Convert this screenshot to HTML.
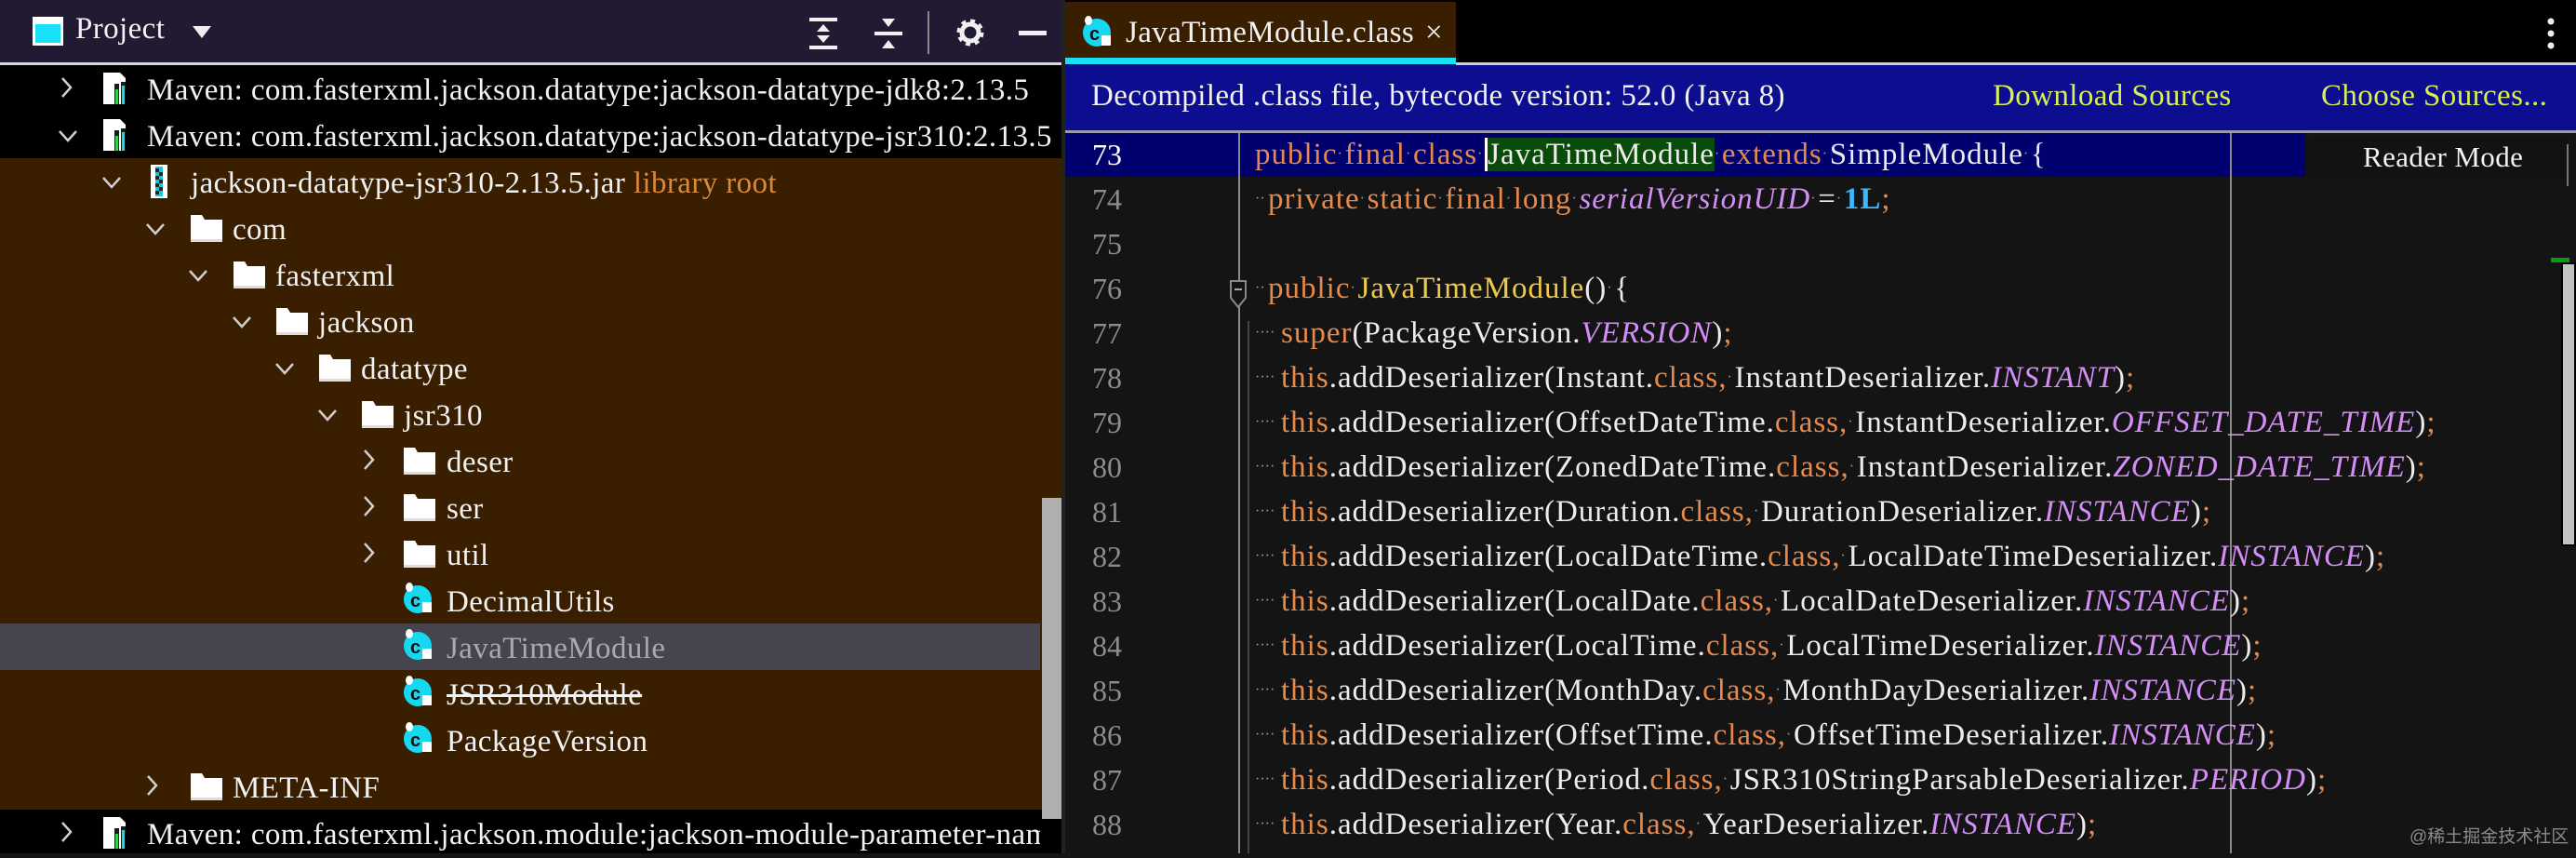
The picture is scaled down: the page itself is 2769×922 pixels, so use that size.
<!DOCTYPE html>
<html><head><meta charset="utf-8"><style>
*{margin:0;padding:0;box-sizing:border-box}
body{width:2769px;height:917px;overflow:hidden;background:#141414;position:relative;font-family:"Liberation Serif","Noto Serif CJK SC",serif;color:#f2f2f2}
.a{position:absolute}
.t{position:absolute;font-size:33px;line-height:50px;white-space:nowrap;letter-spacing:0.4px}
.c{position:absolute;font-size:33px;line-height:48px;white-space:nowrap;letter-spacing:1px;color:#ececec}
.k{color:#e8894a}.f{color:#d58ef7;font-style:italic}.n{color:#3cb8ff;font-weight:bold}.y{color:#eec94a}
.d{color:#9a9a9a;font-size:16px;display:inline-block;width:8px;vertical-align:top;letter-spacing:0;overflow:hidden}
.ln{position:absolute;left:1174px;font-size:32px;line-height:48px;color:#8c8c8c}
</style></head><body>
<div class="a" style="left:0;top:0;width:1145px;height:68px;background:#221a33"></div>
<div class="a" style="left:0;top:67px;width:1145px;height:3px;background:#d8d8d8"></div>
<div class="a" style="left:0;top:70px;width:1145px;height:100px;background:#000"></div>
<div class="a" style="left:0;top:170px;width:1145px;height:700px;background:#3a1e00"></div>
<div class="a" style="left:0;top:870px;width:1145px;height:47px;background:#000"></div>
<div class="a" style="left:0;top:670px;width:1118px;height:50px;background:#45444f"></div>
<div class="a" style="left:1120px;top:535px;width:21px;height:345px;background:#b0b0b0"></div>
<svg class="a" style="left:34px;top:17px" width="36" height="34"><rect x="1" y="1" width="33" height="31" fill="#fff"/><rect x="4" y="9" width="27" height="20" fill="#18e0f6"/></svg>
<div class="t" style="left:81px;top:6px">Project</div>
<svg class="a" style="left:206px;top:27px" width="22" height="16"><path d="M1 1h20L11 14z" fill="#eee"/></svg>
<svg class="a" style="left:868px;top:18px" width="36" height="36" fill="#f0f0f0"><rect x="2" y="1" width="30" height="4"/><rect x="2" y="31" width="30" height="4"/><path d="M17 8l7 8H10z M17 28l7-8H10z"/></svg>
<svg class="a" style="left:938px;top:18px" width="36" height="36" fill="#f0f0f0"><rect x="2" y="16" width="30" height="4"/><path d="M10 2h14l-7 9z M10 34h14l-7-9z"/></svg>
<div class="a" style="left:997px;top:12px;width:2px;height:46px;background:#888"></div>
<svg class="a" style="left:1026px;top:18px" width="34" height="34"><circle cx="17" cy="17" r="11" fill="none" stroke="#f0f0f0" stroke-width="7" stroke-dasharray="4.3 4.3"/><circle cx="17" cy="17" r="9" fill="none" stroke="#f0f0f0" stroke-width="5"/></svg>
<div class="a" style="left:1095px;top:33px;width:30px;height:5px;background:#f0f0f0"></div>

<svg width="0" height="0" style="position:absolute"><defs>
<g id="cr"><path d="M3 2l9 10-9 10" fill="none" stroke="#cfcfcf" stroke-width="2.5"/></g>
<g id="cd"><path d="M2 5l9 10 9-10" fill="none" stroke="#cfcfcf" stroke-width="2.5"/></g>
<g id="fo"><path d="M0 2h12l3 5h19v24H0z" fill="#fff"/><rect y="28" width="34" height="3" fill="#ddd"/></g>
<g id="cl"><circle cx="17" cy="19" r="15" fill="#16d8f0"/><ellipse cx="8" cy="6" rx="4" ry="5" fill="#fff"/><text x="9" y="27" font-family="Liberation Sans" font-size="20" font-weight="bold" fill="#111">c</text><rect x="22" y="22" width="10" height="11" fill="#fff"/></g>
<g id="mv"><path d="M0 0h18l6 6v28H0z" fill="#fff"/><rect x="12" y="12" width="5" height="22" fill="#1a1a1a"/><rect x="13" y="18" width="3" height="16" fill="#2fd04a"/><rect x="19" y="10" width="5" height="24" fill="#1a1a1a"/><rect x="20" y="14" width="3" height="20" fill="#18d8f0"/></g>
</defs></svg>

<svg class="a" style="left:64px;top:82px" width="20" height="26"><use href="#cr"/></svg>
<svg class="a" style="left:111px;top:78px" width="26" height="36"><use href="#mv"/></svg>
<div class="t" style="left:158px;top:72px">Maven: com.fasterxml.jackson.datatype:jackson-datatype-jdk8:2.13.5</div>
<svg class="a" style="left:62px;top:136px" width="24" height="22"><use href="#cd"/></svg>
<svg class="a" style="left:111px;top:128px" width="26" height="36"><use href="#mv"/></svg>
<div class="t" style="left:158px;top:122px">Maven: com.fasterxml.jackson.datatype:jackson-datatype-jsr310:2.13.5</div>
<svg class="a" style="left:109px;top:186px" width="24" height="22"><use href="#cd"/></svg>
<svg class="a" style="left:162px;top:177px" width="20" height="36"><rect x="0" y="0" width="18" height="36" fill="#fff"/><rect x="5" y="2" width="8" height="32" fill="#18c8d8"/><path d="M5 4h4v4H5zM9 8h4v4H9zM5 12h4v4H5zM9 16h4v4H9zM5 20h4v4H5zM9 24h4v4H9zM5 28h4v4H5z" fill="#222"/></svg>
<div class="t" style="left:205px;top:172px">jackson-datatype-jsr310-2.13.5.jar <span style="color:#d68a3c">library root</span></div>
<svg class="a" style="left:156px;top:236px" width="24" height="22"><use href="#cd"/></svg>
<svg class="a" style="left:205px;top:229px" width="36" height="33"><use href="#fo"/></svg>
<div class="t" style="left:250px;top:222px">com</div>
<svg class="a" style="left:202px;top:286px" width="24" height="22"><use href="#cd"/></svg>
<svg class="a" style="left:251px;top:279px" width="36" height="33"><use href="#fo"/></svg>
<div class="t" style="left:296px;top:272px">fasterxml</div>
<svg class="a" style="left:249px;top:336px" width="24" height="22"><use href="#cd"/></svg>
<svg class="a" style="left:297px;top:329px" width="36" height="33"><use href="#fo"/></svg>
<div class="t" style="left:342px;top:322px">jackson</div>
<svg class="a" style="left:295px;top:386px" width="24" height="22"><use href="#cd"/></svg>
<svg class="a" style="left:343px;top:379px" width="36" height="33"><use href="#fo"/></svg>
<div class="t" style="left:388px;top:372px">datatype</div>
<svg class="a" style="left:341px;top:436px" width="24" height="22"><use href="#cd"/></svg>
<svg class="a" style="left:389px;top:429px" width="36" height="33"><use href="#fo"/></svg>
<div class="t" style="left:434px;top:422px">jsr310</div>
<svg class="a" style="left:389px;top:482px" width="20" height="26"><use href="#cr"/></svg>
<svg class="a" style="left:434px;top:479px" width="36" height="33"><use href="#fo"/></svg>
<div class="t" style="left:480px;top:472px">deser</div>
<svg class="a" style="left:389px;top:532px" width="20" height="26"><use href="#cr"/></svg>
<svg class="a" style="left:434px;top:529px" width="36" height="33"><use href="#fo"/></svg>
<div class="t" style="left:480px;top:522px">ser</div>
<svg class="a" style="left:389px;top:582px" width="20" height="26"><use href="#cr"/></svg>
<svg class="a" style="left:434px;top:579px" width="36" height="33"><use href="#fo"/></svg>
<div class="t" style="left:480px;top:572px">util</div>
<svg class="a" style="left:432px;top:625px" width="36" height="36"><use href="#cl"/></svg>
<div class="t" style="left:480px;top:622px">DecimalUtils</div>
<svg class="a" style="left:432px;top:675px" width="36" height="36"><use href="#cl"/></svg>
<div class="t" style="left:480px;top:672px;color:#a9a9b2">JavaTimeModule</div>
<svg class="a" style="left:432px;top:725px" width="36" height="36"><use href="#cl"/></svg>
<div class="t" style="left:480px;top:722px;text-decoration:line-through">JSR310Module</div>
<svg class="a" style="left:432px;top:775px" width="36" height="36"><use href="#cl"/></svg>
<div class="t" style="left:480px;top:772px">PackageVersion</div>
<svg class="a" style="left:156px;top:832px" width="20" height="26"><use href="#cr"/></svg>
<svg class="a" style="left:205px;top:829px" width="36" height="33"><use href="#fo"/></svg>
<div class="t" style="left:250px;top:822px">META-INF</div>
<svg class="a" style="left:64px;top:882px" width="20" height="26"><use href="#cr"/></svg>
<svg class="a" style="left:111px;top:878px" width="26" height="36"><use href="#mv"/></svg>
<div class="t" style="left:158px;top:872px;width:960px;overflow:hidden">Maven: com.fasterxml.jackson.module:jackson-module-parameter-names</div>

<div class="a" style="left:1141px;top:0;width:4px;height:917px;background:#222"></div>
<div class="a" style="left:1145px;top:0;width:1624px;height:68px;background:#000"></div>
<div class="a" style="left:1145px;top:2px;width:420px;height:60px;background:#3a1e00"></div>
<div class="a" style="left:1145px;top:62px;width:420px;height:7px;background:#18e0f6"></div>
<div class="a" style="left:1565px;top:67px;width:1204px;height:3px;background:#d0d0d0"></div>
<svg class="a" style="left:1162px;top:16px" width="36" height="40"><use href="#cl"/></svg>
<div class="t" style="left:1210px;top:10px">JavaTimeModule.class</div>
<div class="t" style="left:1532px;top:10px">×</div>
<svg class="a" style="left:2736px;top:18px" width="12" height="36" fill="#eee"><circle cx="6" cy="5" r="3.5"/><circle cx="6" cy="18" r="3.5"/><circle cx="6" cy="31" r="3.5"/></svg>

<div class="a" style="left:1145px;top:70px;width:1624px;height:70px;background:#0d0d90"></div>
<div class="t" style="left:1173px;top:78px">Decompiled .class file, bytecode version: 52.0 (Java 8)</div>
<div class="t" style="left:2142px;top:78px;color:#d8ef58">Download Sources</div>
<div class="t" style="left:2495px;top:78px;color:#d8ef58">Choose Sources...</div>
<div class="a" style="left:1145px;top:140px;width:1624px;height:3px;background:#9a9aa8"></div>

<div class="a" style="left:1145px;top:143px;width:1333px;height:47px;background:#00006e"></div>
<div class="a" style="left:2478px;top:148px;width:282px;height:44px;background:#121212;border-top-left-radius:8px"></div>
<div class="t" style="left:2540px;top:146px;font-size:31px;line-height:46px">Reader Mode</div>
<div class="a" style="left:2759px;top:155px;width:2px;height:45px;background:#777"></div>
<div class="a" style="left:1331px;top:143px;width:2px;height:774px;background:#8a8a8a"></div>
<div class="a" style="left:2397px;top:143px;width:2px;height:774px;background:#8a8a8a"></div>
<div class="a" style="left:1341px;top:345px;width:2px;height:572px;background:#444"></div>
<svg class="a" style="left:1321px;top:300px" width="22" height="32"><path d="M2 2h16v18l-8 10-8-10z" fill="#141414" stroke="#888" stroke-width="2"/><path d="M6 11h8" stroke="#aaa" stroke-width="2"/></svg>
<div class="a" style="left:2742px;top:277px;width:20px;height:5px;background:#0a9a1a"></div>
<div class="a" style="left:2753px;top:282px;width:16px;height:305px;background:#c2c2c2;border:2px solid #000"></div>

<div class="ln" style="top:142px;color:#fff">73</div>
<div class="ln" style="top:190px">74</div>
<div class="ln" style="top:238px">75</div>
<div class="ln" style="top:286px">76</div>
<div class="ln" style="top:334px">77</div>
<div class="ln" style="top:382px">78</div>
<div class="ln" style="top:430px">79</div>
<div class="ln" style="top:478px">80</div>
<div class="ln" style="top:526px">81</div>
<div class="ln" style="top:574px">82</div>
<div class="ln" style="top:622px">83</div>
<div class="ln" style="top:670px">84</div>
<div class="ln" style="top:718px">85</div>
<div class="ln" style="top:766px">86</div>
<div class="ln" style="top:814px">87</div>
<div class="ln" style="top:862px">88</div>

<div class="c" style="left:1349px;top:142px"><span class="k">public</span><span class="d">·</span><span class="k">final</span><span class="d">·</span><span class="k">class</span><span class="d">·</span><span style="background:#0a4a0a;border-left:3px solid #fff">JavaTimeModule</span><span class="d">·</span><span class="k">extends</span><span class="d">·</span>SimpleModule<span class="d">·</span>{</div>
<div class="c" style="left:1349px;top:190px"><span class="d" style="width:14px">··</span><span class="k">private</span><span class="d">·</span><span class="k">static</span><span class="d">·</span><span class="k">final</span><span class="d">·</span><span class="k">long</span><span class="d">·</span><span class="f">serialVersionUID</span><span class="d">·</span>=<span class="d">·</span><span class="n">1L</span><span class="k">;</span></div>
<div class="c" style="left:1349px;top:286px"><span class="d" style="width:14px">··</span><span class="k">public</span><span class="d">·</span><span class="y">JavaTimeModule</span>()<span class="d">·</span>{</div>
<div class="c" style="left:1349px;top:334px"><span class="d" style="width:28px">····</span><span class="k">super</span>(PackageVersion.<span class="f">VERSION</span>)<span class="k">;</span></div>
<div class="c" style="left:1349px;top:382px"><span class="d" style="width:28px">····</span><span class="k">this</span>.addDeserializer(Instant.<span class="k">class,</span><span class="d">·</span>InstantDeserializer.<span class="f">INSTANT</span>)<span class="k">;</span></div>
<div class="c" style="left:1349px;top:430px"><span class="d" style="width:28px">····</span><span class="k">this</span>.addDeserializer(OffsetDateTime.<span class="k">class,</span><span class="d">·</span>InstantDeserializer.<span class="f">OFFSET_DATE_TIME</span>)<span class="k">;</span></div>
<div class="c" style="left:1349px;top:478px"><span class="d" style="width:28px">····</span><span class="k">this</span>.addDeserializer(ZonedDateTime.<span class="k">class,</span><span class="d">·</span>InstantDeserializer.<span class="f">ZONED_DATE_TIME</span>)<span class="k">;</span></div>
<div class="c" style="left:1349px;top:526px"><span class="d" style="width:28px">····</span><span class="k">this</span>.addDeserializer(Duration.<span class="k">class,</span><span class="d">·</span>DurationDeserializer.<span class="f">INSTANCE</span>)<span class="k">;</span></div>
<div class="c" style="left:1349px;top:574px"><span class="d" style="width:28px">····</span><span class="k">this</span>.addDeserializer(LocalDateTime.<span class="k">class,</span><span class="d">·</span>LocalDateTimeDeserializer.<span class="f">INSTANCE</span>)<span class="k">;</span></div>
<div class="c" style="left:1349px;top:622px"><span class="d" style="width:28px">····</span><span class="k">this</span>.addDeserializer(LocalDate.<span class="k">class,</span><span class="d">·</span>LocalDateDeserializer.<span class="f">INSTANCE</span>)<span class="k">;</span></div>
<div class="c" style="left:1349px;top:670px"><span class="d" style="width:28px">····</span><span class="k">this</span>.addDeserializer(LocalTime.<span class="k">class,</span><span class="d">·</span>LocalTimeDeserializer.<span class="f">INSTANCE</span>)<span class="k">;</span></div>
<div class="c" style="left:1349px;top:718px"><span class="d" style="width:28px">····</span><span class="k">this</span>.addDeserializer(MonthDay.<span class="k">class,</span><span class="d">·</span>MonthDayDeserializer.<span class="f">INSTANCE</span>)<span class="k">;</span></div>
<div class="c" style="left:1349px;top:766px"><span class="d" style="width:28px">····</span><span class="k">this</span>.addDeserializer(OffsetTime.<span class="k">class,</span><span class="d">·</span>OffsetTimeDeserializer.<span class="f">INSTANCE</span>)<span class="k">;</span></div>
<div class="c" style="left:1349px;top:814px"><span class="d" style="width:28px">····</span><span class="k">this</span>.addDeserializer(Period.<span class="k">class,</span><span class="d">·</span>JSR310StringParsableDeserializer.<span class="f">PERIOD</span>)<span class="k">;</span></div>
<div class="c" style="left:1349px;top:862px"><span class="d" style="width:28px">····</span><span class="k">this</span>.addDeserializer(Year.<span class="k">class,</span><span class="d">·</span>YearDeserializer.<span class="f">INSTANCE</span>)<span class="k">;</span></div>

<div class="a" style="left:2590px;top:884px;white-space:nowrap;font-family:'Liberation Sans','Noto Sans CJK SC',sans-serif;font-size:19px;color:#8a8a8a">@稀土掘金技术社区</div>
</body></html>
